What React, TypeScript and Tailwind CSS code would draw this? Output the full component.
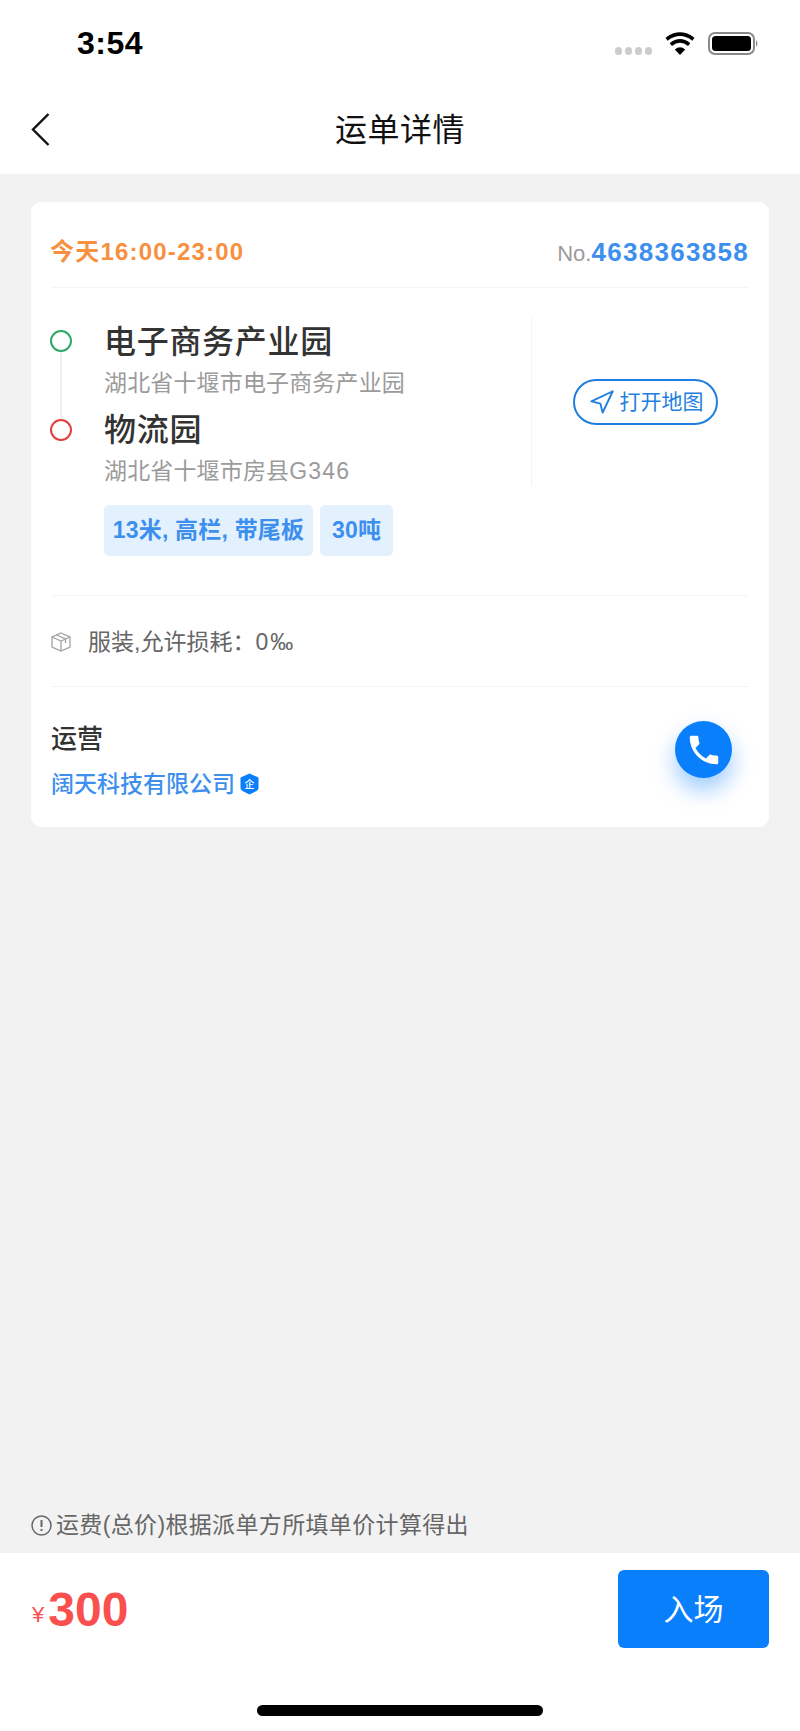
import React from 'react';
import { Navigation } from 'lucide-react';

const cjk = "font-['Liberation_Sans','Noto_Sans_CJK_SC',sans-serif]";

function StatusBar() {
  return (
    <div className="h-[88px] bg-white flex items-start justify-between pt-[26px] pl-[77px] pr-[41px]">
      <span className="font-bold text-[32px] leading-[34px] text-black tracking-[0.5px]">3:54</span>
      <div className="flex items-start pt-[6px]">
        {/* signal dots */}
        <div className="flex gap-[3px] mt-[15px] mr-[13px]">
          <i className="w-[7px] h-[8px] rounded-full bg-[#cccccc]" />
          <i className="w-[7px] h-[8px] rounded-full bg-[#cccccc]" />
          <i className="w-[7px] h-[8px] rounded-full bg-[#cccccc]" />
          <i className="w-[7px] h-[8px] rounded-full bg-[#cccccc]" />
        </div>
        <svg width="30" height="23" viewBox="0 0 30 23" className="mr-[13px]">
          <path d="M15 23 L9.8 17.4 Q15 13.2 20.2 17.4 Z" fill="#000" />
          <path d="M5.8 12.6 Q15 5.2 24.2 12.6" fill="none" stroke="#000" strokeWidth="3.6" />
          <path d="M1.6 7.2 Q15 -2.8 28.4 7.2" fill="none" stroke="#000" strokeWidth="3.6" />
        </svg>
        <svg width="51" height="23" viewBox="0 0 51 23">
          <rect x="1" y="1" width="45" height="21" rx="6" fill="none" stroke="#8a8a8a" strokeWidth="2" />
          <rect x="4" y="4" width="39" height="15" rx="3.5" fill="#000" />
          <path d="M48 8 Q51 11.5 48 15 Z" fill="#8a8a8a" />
        </svg>
      </div>
    </div>
  );
}

function NavBar() {
  return (
    <div className="h-[86px] bg-white grid grid-cols-[1fr_auto_1fr] items-center pb-[2px] px-[31px]">
      <svg width="19" height="33" viewBox="0 0 19 33" className="-mt-[2px]">
        <path d="M17.5 1 L2 16.5 L17.5 32" fill="none" stroke="#111" strokeWidth="2.4" />
      </svg>
      <span className="text-[32px] leading-[44px] tracking-[0.5px] text-[#111]">运单详情</span>
      <span />
    </div>
  );
}

function RouteStop({ name, addr }: { name: string; addr: React.ReactNode }) {
  return (
    <div>
      <div className="text-[32px] leading-[48px] font-medium tracking-[0.7px] text-[#333333]">{name}</div>
      <div className="text-[23px] leading-[34px] tracking-[0.15px] text-[#9b9b9b]">{addr}</div>
    </div>
  );
}

function Tag({ text, width }: { text: string; width: string }) {
  return (
    <span className={`${width} h-[51px] flex items-center justify-center rounded-[5px] bg-[#e3f1ff] text-[23px] font-bold tracking-[0.2px] text-[#3d8fee]`}>
      {text}
    </span>
  );
}

function BoxIcon() {
  return (
    <svg width="20" height="20" viewBox="0 0 20 20" fill="none" stroke="#a3a3a3" strokeWidth="1.3">
      <path d="M10 1 L19 5 V15 L10 19 L1 15 V5 Z" />
      <path d="M1 5 L10 9 L19 5 M10 9 V19 M5.5 3 L14.5 7 V11" />
    </svg>
  );
}

function CompanyBadge() {
  return (
    <svg width="19" height="22" viewBox="0 0 19 22">
      <path d="M9.5 0.5 L18.5 4.5 V15 Q18.5 17 16.5 18 L9.5 21.5 L2.5 18 Q0.5 17 0.5 15 V4.5 Z" fill="#0a7ffb" />
      <text x="9.5" y="15" textAnchor="middle" fontSize="10" fill="#ffffff" fontFamily="Noto Sans CJK SC">企</text>
    </svg>
  );
}

export default function App() {
  return (
    <div className={`${cjk} w-[800px] h-[1731px] flex flex-col bg-[#f2f2f2]`}>
      <StatusBar />
      <NavBar />

      <main className="flex-1 flex flex-col px-[31px] pt-[28px]">
        <div className="bg-white rounded-[10px] px-[20px] h-[625px]">
          {/* header row */}
          <div className="h-[86px] pt-[15px] flex items-center justify-between border-b border-[#f5f5f5]">
            <span className="text-[24px] font-bold text-[#f7903f] tracking-[1.2px] -ml-px">今天16:00-23:00</span>
            <span className="text-[22px] text-[#9b9b9b]">
              No.<span className="text-[26px] font-bold tracking-[1.3px] text-[#3d8fee]">4638363858</span>
            </span>
          </div>

          {/* route */}
          <div className="h-[308px] pt-[30px] border-b border-[#f5f5f5]">
            <div className="flex h-[168px]">
              <div className="w-[480px] flex">
                <div className="w-[22px] pt-[12px] -ml-px mr-[32px] flex flex-col items-center">
                  <span className="w-[22px] h-[22px] rounded-full border-2 border-[#2fa866]" />
                  <span className="w-[2px] h-[67px] bg-[#f0f0f0]" />
                  <span className="w-[22px] h-[22px] rounded-full border-2 border-[#e0403f]" />
                </div>
                <div className="flex flex-col gap-[6px]">
                  <RouteStop name="电子商务产业园" addr="湖北省十堰市电子商务产业园" />
                  <RouteStop name="物流园" addr={<>湖北省十堰市房县<span className="tracking-[1.2px]">G346</span></>} />
                </div>
              </div>
              <div className="flex-1 border-l border-[#f3f3f3] pl-[41px] pt-[61px]">
                <button className="w-[145px] h-[46px] rounded-full border-2 border-[#1f7fe0] flex items-center justify-center gap-[5px] text-[21px] text-[#1f7fe0]">
                  <Navigation size={27} strokeWidth={1.7} />
                  打开地图
                </button>
              </div>
            </div>
            <div className="flex gap-[7px] ml-[53px] mt-[19px]">
              <Tag text="13米, 高栏, 带尾板" width="w-[209px]" />
              <Tag text="30吨" width="w-[73px]" />
            </div>
          </div>

          {/* cargo */}
          <div className="h-[91px] pt-[2px] flex items-center gap-[17px] border-b border-[#f5f5f5]">
            <BoxIcon />
            <span className="text-[23px] text-[#666666]">
              服装,允许损耗：<span className="tracking-[2px]">0‰</span>
            </span>
          </div>

          {/* company */}
          <div className="flex justify-between items-start">
            <div className="pt-[34px]">
              <div className="text-[26px] leading-[36px] font-medium text-[#333333]">运营</div>
              <div className="mt-[10px] flex items-center gap-[5px] text-[23px] leading-[34px] font-medium text-[#3d8fee]">
                阔天科技有限公司
                <CompanyBadge />
              </div>
            </div>
            <button className="mt-[34px] mr-[17px] w-[57px] h-[57px] rounded-full bg-[#0a7ffb] flex items-center justify-center shadow-[0_12px_22px_rgba(10,127,251,0.4)]">
              <svg width="38" height="38" viewBox="0 0 24 24" fill="#ffffff">
                <path d="M6.62 10.79c1.44 2.83 3.76 5.14 6.59 6.59l2.2-2.2c.27-.27.67-.36 1.02-.24 1.12.37 2.33.57 3.57.57.55 0 1 .45 1 1V20c0 .55-.45 1-1 1-9.39 0-17-7.61-17-17 0-.55.45-1 1-1h3.5c.55 0 1 .45 1 1 0 1.25.2 2.45.57 3.57.11.35.03.74-.25 1.02l-2.2 2.2z" />
              </svg>
            </button>
          </div>
        </div>

        {/* price note */}
        <div className="mt-auto mb-[11px] h-[34px] flex items-center gap-[4px] text-[23px] tracking-[0.35px] text-[#666666]">
          <svg width="21" height="21" viewBox="0 0 21 21" fill="none" stroke="#666666">
            <circle cx="10.5" cy="10.5" r="9.5" strokeWidth="1.5" />
            <path d="M10.5 5 V12" strokeWidth="2" />
            <path d="M10.5 14 V16" strokeWidth="2" />
          </svg>
          <span>运费(总价)根据派单方所填单价计算得出</span>
        </div>
      </main>

      {/* bottom bar */}
      <div className="h-[178px] bg-white flex flex-col items-center">
        <div className="w-full h-[78px] mt-[17px] flex items-center justify-between pl-[32px] pr-[31px]">
          <div className="flex items-baseline text-[#f94f4f] mt-[2px]">
            <span className="text-[22px] font-medium mr-[4px] -translate-y-[4px]">¥</span>
            <span className="text-[48px] font-bold">300</span>
          </div>
          <button className="w-[151px] h-[78px] rounded-[6px] bg-[#0a7ffb] text-white text-[30px]">入场</button>
        </div>
        <div className="mt-[57px] w-[286px] h-[11px] rounded-full bg-black" />
      </div>
    </div>
  );
}
